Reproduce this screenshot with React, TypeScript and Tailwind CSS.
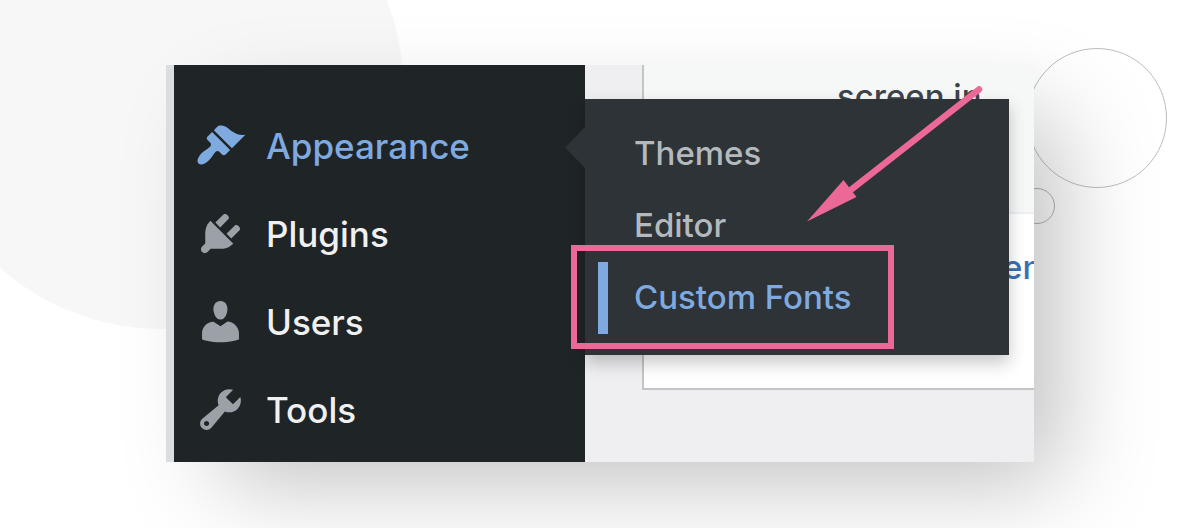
import React from 'react';

interface MenuItem {
    label: string;
    icon: string;
    active?: boolean;
}

const MENU_ITEMS: MenuItem[] = [
    {
        label: 'Appearance',
        icon: 'M14.48 11.06L7.41 3.99l1.5-1.5c.5-.56 2.3-.47 3.51.32 1.21.8 1.43 1.28 2.91 2.1 1.18.64 2.45 1.26 4.45.85zm-.71.71L6.7 4.7 4.93 6.47c-.39.39-.39 1.02 0 1.41l1.06 1.06c.39.39.39 1.03 0 1.42-.6.6-1.43 1.11-2.21 1.69-.35.26-.7.53-1.01.84C1.43 14.23.4 16.08 1.4 17.07c.99 1 2.84-.03 4.18-1.36.31-.31.58-.66.85-1.02.57-.78 1.08-1.61 1.69-2.21.39-.39 1.02-.39 1.41 0l1.06 1.06c.39.39 1.02.39 1.41 0z',
        active: true,
    },
    {
        label: 'Plugins',
        icon: 'M13.11 4.36L9.87 7.6 8 5.73l3.24-3.24c.35-.34 1.05-.2 1.56.32.52.51.66 1.21.31 1.55zm-8 1.77l.91-1.12 9.01 9.01-1.19.84c-.71.71-2.63 1.16-3.82 1.16H6.14L4.9 17.26c-.59.59-1.54.59-2.12 0-.59-.58-.59-1.53 0-2.12l1.24-1.24v-3.88c0-1.13.4-3.19 1.09-3.89zm7.26 3.97l3.24-3.24c.34-.35 1.04-.21 1.55.31.52.51.66 1.21.31 1.55l-3.24 3.25z',
    },
    {
        label: 'Users',
        icon: 'M10 9.25c-2.27 0-2.73-3.44-2.73-3.44C7 4.02 7.82 2 9.97 2c2.16 0 2.98 2.02 2.71 3.81 0 0-.41 3.44-2.68 3.44zm0 2.57L12.72 10c2.39 0 4.52 2.33 4.52 4.53v2.49s-3.65 1.13-7.24 1.13c-3.65 0-7.24-1.13-7.24-1.13v-2.49c0-2.25 1.94-4.48 4.47-4.48z',
    },
    {
        label: 'Tools',
        icon: 'M16.68 9.77c-1.34 1.34-3.3 1.67-4.95.99l-5.41 6.52c-.99.99-2.59.99-3.58 0s-.99-2.59 0-3.57l6.52-5.42c-.68-1.65-.35-3.61.99-4.95 1.28-1.28 3.12-1.62 4.72-1.06l-2.89 2.89 2.82 2.82 2.86-2.87c.53 1.58.18 3.39-1.08 4.65zM3.81 16.21c.4.39 1.04.39 1.43 0 .4-.4.4-1.04 0-1.43-.39-.4-1.03-.4-1.43 0-.39.39-.39 1.03 0 1.43z',
    },
];

const SUBMENU_ITEMS = [
    { label: 'Themes', current: false },
    { label: 'Editor', current: false },
    { label: 'Custom Fonts', current: true },
];

const Arrow: React.FC = () => (
    <svg className="absolute left-[215px] -top-[19px] pointer-events-none" width="190" height="150" viewBox="0 0 190 150" fill="#ec6896">
        <path d="M179 9.500L52 109" stroke="#ec6896" strokeWidth="6.500" strokeLinecap="round" />
        <path d="M7 141.500L43.500 100l13 17z" />
    </svg>
);

const Submenu: React.FC = () => (
    <div className="absolute left-full -top-[2px] w-[424px] pt-[19px] pb-[21px] pl-[13px] bg-[#2d3337] shadow-[0_8px_16px_rgba(0,0,0,0.22)]">
        <svg className="absolute -left-5 top-[28px]" width="21" height="41" viewBox="0 0 21 41" fill="#2d3337">
            <path d="M0 20.500L20 0h1v41h-1z" />
        </svg>
        <ul>
            {SUBMENU_ITEMS.map(item => (
                <li key={item.label} className="relative">
                    <a
                        href="#"
                        className={`flex items-center h-[72px] pl-[26px] border-l-[10px] text-[33px] ${item.current ? 'border-[#7faae0] text-[#7faae0]' : 'border-transparent text-[#b4b9bd]'}`}
                    >
                        {item.label}
                    </a>
                    {item.current && (
                        <span className="absolute -left-[27px] -top-[17px] w-[323px] h-[104px] border-[6px] border-[#ec6896] pointer-events-none" />
                    )}
                </li>
            ))}
        </ul>
        <Arrow />
    </div>
);

const Sidebar: React.FC = () => (
    <nav className="relative z-10 w-[411px] shrink-0 pt-9 pb-[9px] bg-[#1f2427]">
        <ul>
            {MENU_ITEMS.map(item => (
                <li key={item.label} className="relative">
                    <a href="#" className={`flex items-center gap-5 h-[88px] pl-[21px] text-[35px] ${item.active ? 'text-[#7faae0]' : 'text-[#f0f0f1]'}`}>
                        <svg className={item.active ? 'text-[#7faae0]' : 'text-[#9ca1a7]'} width="51" height="51" viewBox="0 0 20 20" fill="currentColor">
                            <path d={item.icon} />
                        </svg>
                        <span className="pt-[2px]">{item.label}</span>
                    </a>
                    {item.active && <Submenu />}
                </li>
            ))}
        </ul>
    </nav>
);

const Content: React.FC = () => (
    <main className="flex flex-col flex-1 min-w-0 pl-[57px] pb-[72px] bg-[#efeff1] overflow-hidden whitespace-nowrap text-[33px]">
        <div className="flex flex-col flex-1 border-l-2 border-b-2 border-[#c3c4c7] bg-white">
            <p className="h-[149px] pt-[7px] pl-[193px] border-b-2 border-[#eeeff0] bg-[#f6f7f7] text-[#3c434a]">screen in</p>
            <p className="pt-[29px] pl-[359px]">
                <a href="#" className="text-[#3a70b4]">en</a>
            </p>
        </div>
    </main>
);

const App: React.FC = () => (
    <div className="relative min-h-screen overflow-hidden bg-white px-[166px] pt-[65px] pb-[66px] font-['Inter',sans-serif] font-[450]">
        {/* background decoration */}
        <div className="absolute -left-[81px] -top-[155px] size-[484px] rounded-full bg-[#f7f7f7]" />
        <div className="absolute right-[33px] top-[48px] size-[140px] rounded-full border border-[#bdbdbd]" />
        <div className="absolute right-[145px] top-[188px] size-[36px] rounded-full border border-[#b4b4b4]" />

        <div className="relative flex border-l-8 border-[#dcdde1] shadow-[40px_36px_90px_-16px_rgba(0,0,0,0.25)]">
            <Sidebar />
            <Content />
        </div>
    </div>
);

export default App;
